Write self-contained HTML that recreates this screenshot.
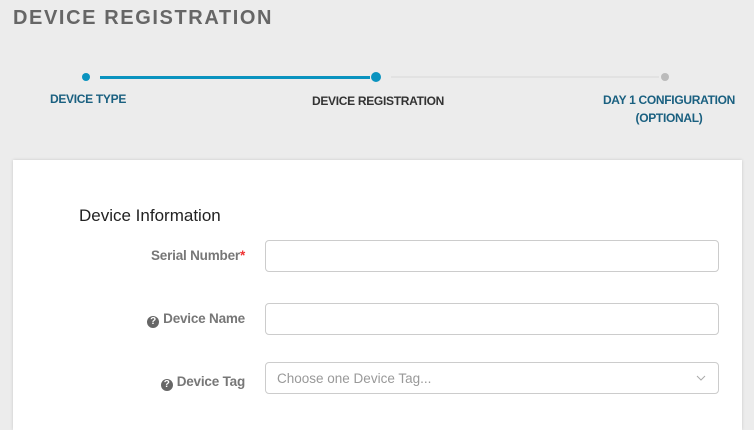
<!DOCTYPE html>
<html><head><style>
body{margin:0;width:754px;height:421px;overflow:hidden;background:#ececec;font-family:"Liberation Sans",sans-serif;position:relative}
.t{position:absolute;left:13px;top:7px;font-size:20px;font-weight:bold;letter-spacing:1.6px;color:#666}
.dot{position:absolute;border-radius:50%}
.line{position:absolute;height:3px}
.lb{position:absolute;font-size:12px;font-weight:bold;text-align:center;letter-spacing:-0.3px}
.card{position:absolute;left:13px;top:160px;width:729px;height:270px;background:#fff;box-shadow:0 0 3px rgba(0,0,0,.15)}
.h{position:absolute;left:79px;top:206px;font-size:17px;color:#222}
.fl{position:absolute;right:509px;font-size:13.5px;font-weight:bold;color:#777;white-space:nowrap;letter-spacing:-0.2px}
.q{display:inline-block;width:12px;height:12px;border-radius:50%;background:#666;color:#fff;font-size:10px;line-height:12px;text-align:center;vertical-align:-1px;margin-right:4px}
.in{position:absolute;left:265px;width:452px;height:30px;border:1px solid #ccc;border-radius:4px;background:#fff}
</style></head><body>
<div class="t">DEVICE REGISTRATION</div>
<div class="dot" style="left:82px;top:73px;width:8px;height:8px;background:#0a93bf"></div>
<div class="line" style="left:100px;top:76px;width:270px;background:#0a93bf"></div>
<div class="dot" style="left:371px;top:72px;width:10px;height:10px;background:#0a93bf"></div>
<div class="line" style="left:391px;top:76px;width:268px;background:#e2e2e2;height:2px"></div>
<div class="dot" style="left:661px;top:73px;width:8px;height:8px;background:#bbb"></div>
<div class="lb" style="left:28px;top:92px;width:120px;color:#1a6080">DEVICE TYPE</div>
<div class="lb" style="left:298px;top:94px;width:160px;color:#333">DEVICE REGISTRATION</div>
<div class="lb" style="left:584px;top:91px;width:170px;color:#1a6080;line-height:18px">DAY 1 CONFIGURATION<br>(OPTIONAL)</div>
<div class="card"></div>
<div class="h">Device Information</div>
<div class="fl" style="top:248px">Serial Number<span style="color:#e33">*</span></div>
<div class="in" style="top:240px"></div>
<div class="fl" style="top:311px"><span class="q">?</span>Device Name</div>
<div class="in" style="top:303px"></div>
<div class="fl" style="top:374px"><span class="q">?</span>Device Tag</div>
<div class="in" style="top:362px"><span style="position:absolute;left:11px;top:8px;font-size:13.5px;color:#999">Choose one Device Tag...</span>
<svg style="position:absolute;right:12px;top:12px" width="10" height="6"><path d="M1 1L5 5L9 1" stroke="#aaa" fill="none"/></svg></div>
</body></html>
